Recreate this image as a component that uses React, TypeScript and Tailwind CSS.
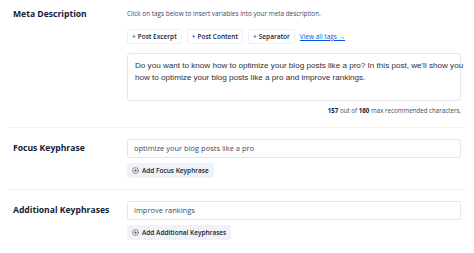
import { PlusCircle } from "lucide-react";

const tags = ["Post Excerpt", "Post Content", "Separator"];

function Row({
  label,
  labelClass,
  children,
}: {
  label: string;
  labelClass: string;
  children: React.ReactNode;
}) {
  return (
    <div className="flex">
      <div
        className={`w-[127px] shrink-0 pl-[13px] font-bold text-[8.6px] text-[#141b38] ${labelClass}`}
      >
        {label}
      </div>
      <div className="w-[334px]">{children}</div>
    </div>
  );
}

function AddButton({ text }: { text: string }) {
  return (
    <button
      className="mt-[5px] flex h-[15px] items-center gap-[3px] rounded-[2px] bg-[#f0f2f5] px-[5px] font-semibold text-[6.5px] text-[#141b38]"
      type="button"
    >
      <PlusCircle className="h-[7px] w-[7px] text-[#434960]" strokeWidth={2} />
      {text}
    </button>
  );
}

export default function App() {
  return (
    <div
      className="h-[253px] w-[474px] overflow-hidden bg-white text-[#434960]"
      style={{ fontFamily: '"Open Sans", "Liberation Sans", sans-serif' }}
    >
      {/* Meta Description */}
      <div className="pt-[9px] pb-[12px]">
        <Row label="Meta Description" labelClass="leading-[10px]">
          <div className="text-[6.4px] leading-[10px]">
            Click on tags below to insert variables into your meta description.
          </div>
          <div className="mt-[10px] flex items-center gap-[5px]">
            {tags.map((t) => (
              <span
                className="flex h-[15px] items-center gap-[2px] rounded-[2px] border border-[#eef0f3] bg-white px-[4px] font-semibold text-[6.5px] text-[#141b38]"
                key={t}
              >
                <span className="text-[#005ae0]">+</span>
                {t}
              </span>
            ))}
            <span className="text-[6.5px] text-[#005ae0] underline">
              View all tags →
            </span>
          </div>
          <div
            className="mt-[9px] h-[48px] whitespace-nowrap rounded-[3px] border border-[#e4e6ea] px-[7px] pt-[6px] text-[8.1px] leading-[11.5px] text-[#2c2f3a]"
            style={{ fontFamily: '"Liberation Sans", sans-serif' }}
          >
            <div>
              Do you want to know how to optimize your blog posts like a pro? In
              this post, we'll show you
            </div>
            <div>
              how to optimize your blog posts like a pro and improve rankings.
            </div>
          </div>
          <div className="mt-[6px] text-right text-[6.2px] leading-[8px] text-[#434960]">
            <span className="font-bold text-[#141b38]">157</span> out of{" "}
            <span className="font-bold text-[#141b38]">160</span> max
            recommended characters.
          </div>
        </Row>
      </div>

      <div className="mx-[8px] border-t border-[#eef0f3]" />

      {/* Focus Keyphrase */}
      <div className="pt-[11px] pb-[11px]">
        <Row label="Focus Keyphrase" labelClass="leading-[19px]">
          <div className="flex h-[19px] items-center rounded-[2px] border border-[#e4e6ea] px-[6px] text-[7.5px] text-[#434960]">
            optimize your blog posts like a pro
          </div>
          <AddButton text="Add Focus Keyphrase" />
        </Row>
      </div>

      <div className="mx-[8px] border-t border-[#eef0f3]" />

      {/* Additional Keyphrases */}
      <div className="pt-[11px]">
        <Row label="Additional Keyphrases" labelClass="leading-[19px]">
          <div className="flex h-[19px] items-center rounded-[2px] border border-[#e4e6ea] px-[6px] text-[7.5px] text-[#434960]">
            improve rankings
          </div>
          <AddButton text="Add Additional Keyphrases" />
        </Row>
      </div>
    </div>
  );
}
